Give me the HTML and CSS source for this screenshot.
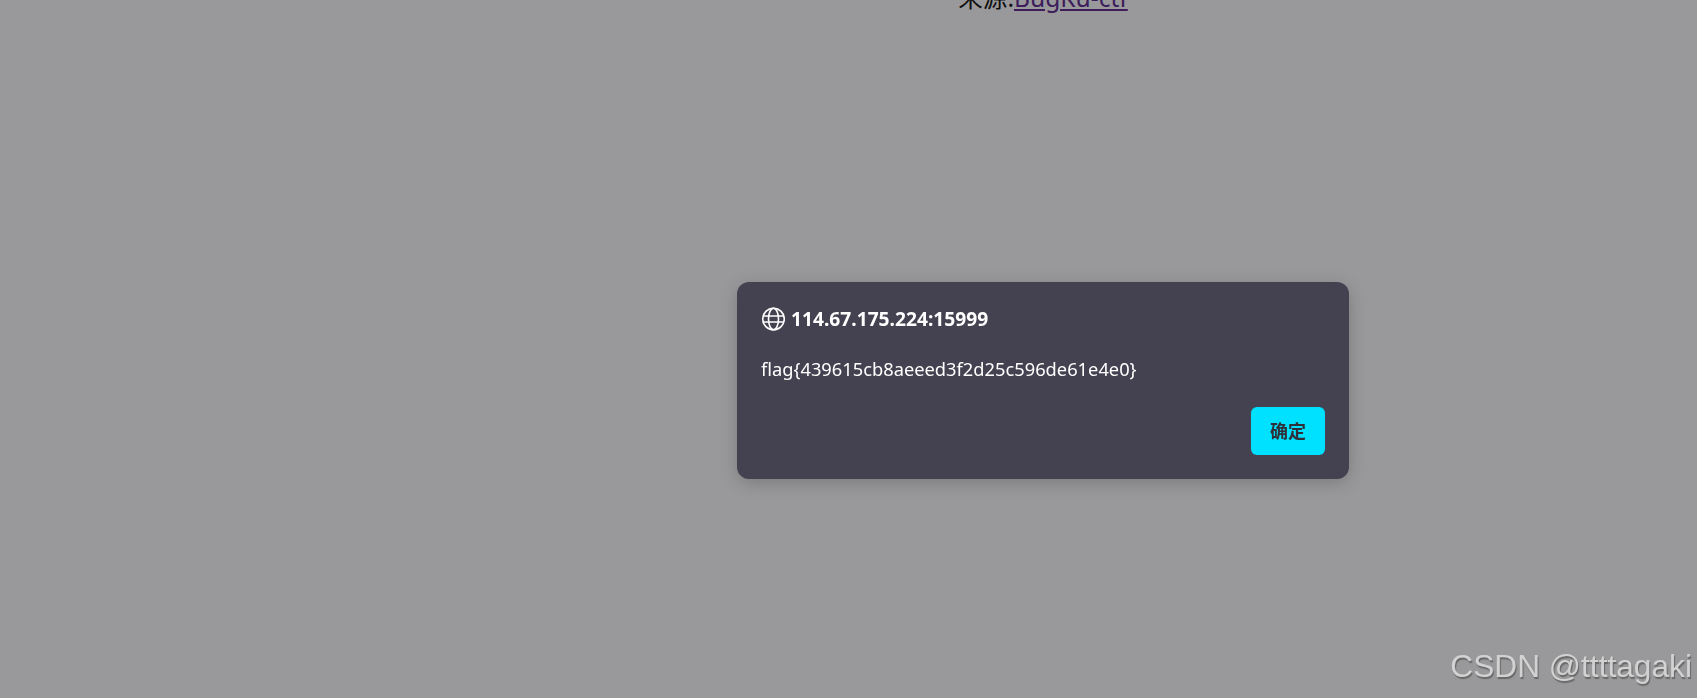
FILE: index.html
```html
<!DOCTYPE html>
<html lang="zh">

<head>
    <meta charset="UTF-8">
    <title>BugKu</title>
    <link rel="stylesheet" href="styles.css">
</head>

<body>

    <p class="source">来源:<a href="#">BugKu-ctf</a></p>

    <div class="overlay">
        <div class="dialog">
            <div class="origin">
                <svg class="globe" viewBox="0 0 24 24" width="24" height="24" fill="none" stroke="#fff" stroke-width="1.6">
                    <circle cx="12.5" cy="12" r="10.8"></circle>
                    <ellipse cx="12.5" cy="12" rx="5" ry="10.8"></ellipse>
                    <path d="M2 9h21M2 15h21"></path>
                </svg>
                <span>114.67.175.224:15999</span>
            </div>
            <p class="message">flag{439615cb8aeeed3f2d25c596de61e4e0}</p>
            <div class="actions">
                <button class="ok">确定</button>
            </div>
        </div>
    </div>

    <div class="watermark">CSDN @ttttagaki</div>

</body></html>
```

FILE: styles.css
```css
* {
    margin: 0px;
    padding: 0px;
    box-sizing: border-box;
}

html,
body {
    height: 100%;
    overflow: hidden;
}

body {
    background: #fff;
    font-family: "Noto Sans", "Noto Sans CJK SC", sans-serif;
}

.source {
    margin-top: -20px;
    padding-left: 389px;
    text-align: center;
    font-size: 24.6px;
    line-height: 36px;
    color: #000;
}

.source a {
    color: #551a8b;
}

.overlay {
    position: fixed;
    inset: 0;
    background: rgba(32, 33, 36, 0.46);
    padding: 282px 0 0 737px;
}

.dialog {
    width: 612px;
    height: 197px;
    padding: 24px;
    border-radius: 12px;
    background: #444250;
    color: #fff;
    box-shadow: 0 4px 18px rgba(0, 0, 0, 0.2);
}

.origin {
    display: flex;
    align-items: center;
    gap: 6px;
    padding-top: 1px;
    font-size: 19.2px;
    font-weight: 700;
    line-height: 24px;
}

.globe {
    flex-shrink: 0;
}

.message {
    margin-top: 26px;
    font-size: 18.3px;
    line-height: 24px;
}

.actions {
    display: flex;
    justify-content: flex-end;
    margin-top: 26px;
}

.ok {
    width: 74px;
    height: 48px;
    border: none;
    border-radius: 6px;
    background: #00e0ff;
    color: #2f3038;
    font-family: inherit;
    font-size: 18px;
    font-weight: 700;
    line-height: 48px;
}

.watermark {
    position: fixed;
    right: 5px;
    bottom: 13px;
    font-family: "Liberation Sans", sans-serif;
    font-size: 31.7px;
    color: #d2d2d2;
    text-shadow: 1px 2px 1px rgba(70, 70, 70, 0.6);
}
```
